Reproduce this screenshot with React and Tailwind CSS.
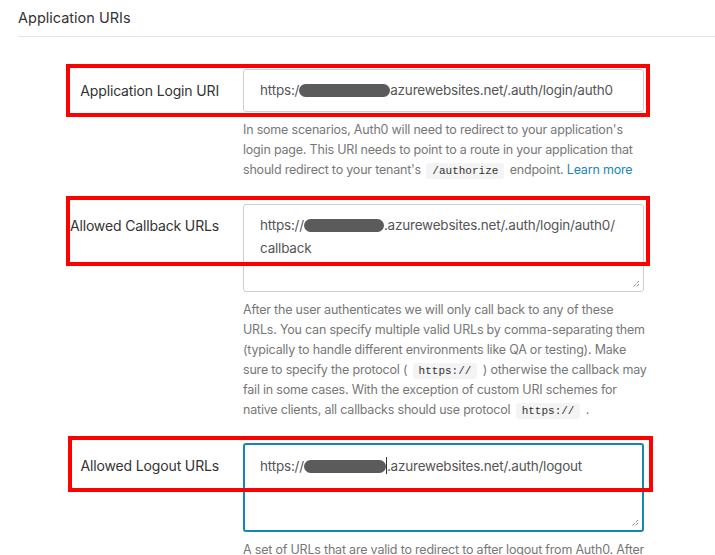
import React from "react";

const font = { fontFamily: "Inter, 'Noto Sans', sans-serif" };

function Blob({ w }) {
  return (
    <span
      className="inline-block h-[13px] rounded-full bg-[#5b5b5b] align-[-2px]"
      style={{ width: w }}
    />
  );
}

function Code({ children }) {
  return (
    <code className="mx-[2px] rounded-[3px] bg-[#f4f4f4] px-[6px] py-[2px] font-['Liberation_Mono',monospace] text-[11px] leading-none tracking-normal text-[#333]">
      {children}
    </code>
  );
}

function Grip() {
  return (
    <svg className="absolute bottom-[3px] right-[3px]" width="9" height="9" viewBox="0 0 9 9">
      <path d="M8 2 L2 8 M8 5 L5 8" stroke="#555" strokeWidth="1" strokeDasharray="1 1" />
    </svg>
  );
}

// red annotation frame drawn over the row
function Mark({ className }) {
  return <div className={`pointer-events-none absolute border-4 border-[#ff0000] ${className}`} />;
}

function Row({ label, labelPt, children, help, mt, mark }) {
  return (
    <div className={`relative flex ${mt}`}>
      <div
        className={`w-[219px] shrink-0 text-right text-[14px] tracking-[-0.15px] text-[#333] ${labelPt}`}
      >
        {label}
      </div>
      <div className="ml-[24px] w-[401px] shrink-0">
        {children}
        <p className="mt-[8px] whitespace-nowrap text-[12.5px] leading-[20px] tracking-[-0.2px] text-[#777]">
          {help}
        </p>
      </div>
      {mark}
    </div>
  );
}

const field = "text-[13.5px] tracking-[-0.2px] text-[#555] whitespace-nowrap";

export default function App() {
  return (
    <div className="relative h-[555px] w-[715px] overflow-hidden bg-white" style={font}>
      <div className="pl-[18px]">
        <h2 className="pt-[8px] text-[14.5px] leading-[20px] text-[#333]">Application URIs</h2>
        <div className="mt-[8px] h-px bg-[#e3e3e3]" />
      </div>

      <Row
        label="Application Login URI"
        labelPt="pt-[11px]"
        mt="mt-[32px]"
        mark={<Mark className="left-[66px] -top-[5px] h-[53px] w-[584px]" />}
        help={
          <>
            In some scenarios, Auth0 will need to redirect to your application's
            <br />
            login page. This URI needs to point to a route in your application that
            <br />
            should redirect to your tenant's <Code>/authorize</Code> endpoint.{" "}
            <span className="text-[#1a85b8]">Learn more</span>
          </>
        }
      >
        <div className={`h-[43px] rounded-[3px] border border-[#cfcfcf] pl-[16px] leading-[41px] ${field}`}>
          https:/
          <Blob w={91} />
          azurewebsites.net/.auth/login/auth0
        </div>
      </Row>

      <Row
        label="Allowed Callback URLs"
        labelPt="pt-[11px]"
        mt="mt-[24px]"
        mark={<Mark className="left-[66px] -top-[8px] h-[70px] w-[584px]" />}
        help={
          <>
            After the user authenticates we will only call back to any of these
            <br />
            URLs. You can specify multiple valid URLs by comma-separating them
            <br />
            (typically to handle different environments like QA or testing). Make
            <br />
            sure to specify the protocol ( <Code>https://</Code> ) otherwise the callback may
            <br />
            fail in some cases. With the exception of custom URI schemes for
            <br />
            native clients, all callbacks should use protocol <Code>https://</Code> .
          </>
        }
      >
        <div className={`relative h-[88px] rounded-[3px] border border-[#cfcfcf] pl-[16px] pt-[9px] leading-[23px] ${field}`}>
          https://
          <Blob w={80} />
          .azurewebsites.net/.auth/login/auth0/
          <br />
          callback
          <Grip />
        </div>
      </Row>

      <Row
        label="Allowed Logout URLs"
        labelPt="pt-[12px]"
        mt="mt-[23px]"
        mark={<Mark className="left-[68px] -top-[7px] h-[56px] w-[585px]" />}
        help={<>A set of URLs that are valid to redirect to after logout from Auth0. After</>}
      >
        <div className={`relative h-[89px] rounded-[3px] border-2 border-[#1586b3] pl-[15px] pt-[10px] leading-[23px] ${field}`}>
          https://
          <Blob w={82} />
          <span className="inline-block h-[17px] w-px bg-[#333] align-[-3px]" />
          .azurewebsites.net/.auth/logout
          <Grip />
        </div>
      </Row>
    </div>
  );
}
